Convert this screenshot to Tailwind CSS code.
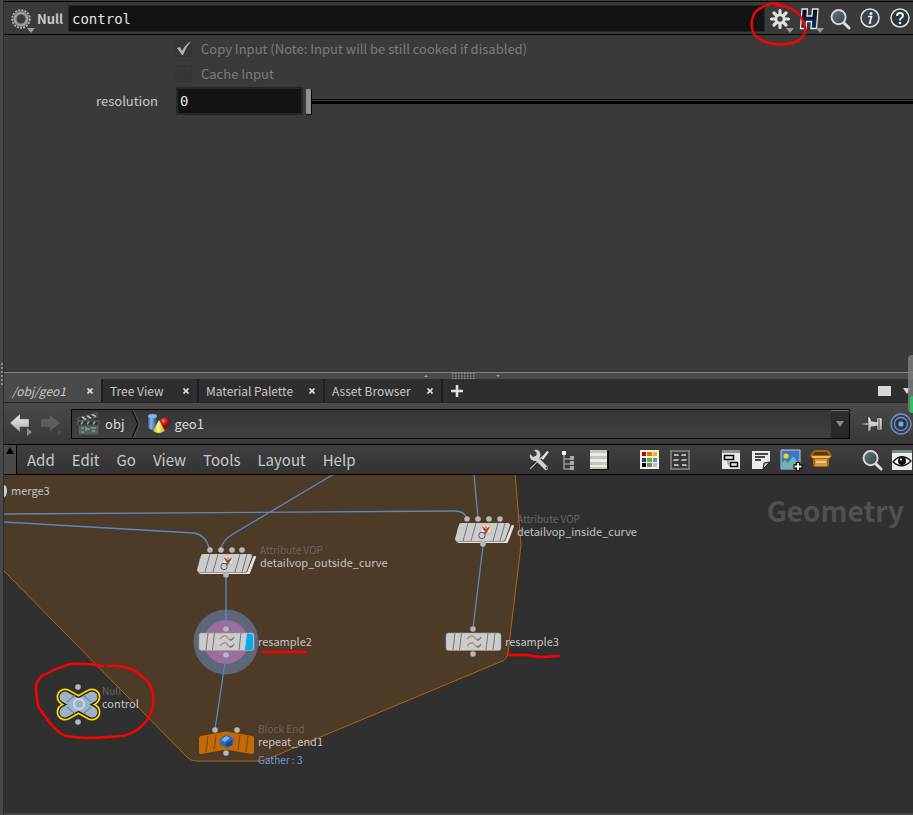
<!DOCTYPE html>
<html lang="en">
<head>
    <meta charset="UTF-8">
    <meta name="viewport" content="width=device-width, initial-scale=1.0">
    <title>/obj/geo1</title>
    <script src="https://cdn.jsdelivr.net/npm/@tailwindcss/browser@4"></script>
</head>
<body class="bg-[#474747] font-['Noto_Sans_CJK_SC','Source_Sans_Pro',sans-serif] text-[#c8c8c8]">

    <!-- Shared gradients and node shapes -->
    <svg class="absolute size-0" aria-hidden="true">
        <defs>
            <linearGradient id="metal" x1="0" y1="0" x2="0" y2="1"><stop offset="0" stop-color="#f4f4f0"/><stop offset="1" stop-color="#a8a8a4"/></linearGradient>
            <linearGradient id="lens" x1="0" y1="0" x2="1" y2="1"><stop offset="0" stop-color="#66757c"/><stop offset="1" stop-color="#36434a"/></linearGradient>
            <linearGradient id="navy" x1="0" y1="0" x2="0" y2="1"><stop offset="0" stop-color="#03070f"/><stop offset="1" stop-color="#0b3768"/></linearGradient>
            <linearGradient id="blueCan" x1="0" x2="1"><stop offset="0" stop-color="#2c5c9c"/><stop offset=".35" stop-color="#8fb6e2"/><stop offset="1" stop-color="#1d4580"/></linearGradient>
            <radialGradient id="redBall" cx=".4" cy=".3"><stop offset="0" stop-color="#f08070"/><stop offset=".5" stop-color="#c42318"/><stop offset="1" stop-color="#7c100c"/></radialGradient>
            <linearGradient id="cone" x1="0" x2="1"><stop offset="0" stop-color="#c9ab10"/><stop offset=".45" stop-color="#fff38a"/><stop offset="1" stop-color="#c79e08"/></linearGradient>
            <radialGradient id="ring"><stop offset=".4" stop-color="#404040"/><stop offset=".75" stop-color="#a8a8a8"/><stop offset="1" stop-color="#707070"/></radialGradient>
            <symbol id="glass" viewBox="0 0 22 22" overflow="visible">
                <path d="M14 14l6 6" stroke="#e0e0dc" stroke-width="3" stroke-linecap="round"/>
                <circle cx="9" cy="8.500" r="7.400" fill="url(#lens)" stroke="#d8d8d4" stroke-width="2"/>
            </symbol>
            <symbol id="vop" viewBox="0 0 64 30" overflow="visible">
                <path d="M8 8h51l3-1-6 16H8l-2-1z" fill="#e4e4e4" stroke="#e4e4e4" stroke-width="2" stroke-linejoin="round"/>
                <path d="M9 6h50l-6 15H6z" fill="#454545" stroke="#454545" stroke-width="3" stroke-linejoin="round"/>
                <path d="M10 6h47l-5 14H6z" fill="#cccccc" stroke="#cccccc" stroke-width="4" stroke-linejoin="round"/>
                <path d="M17 4l-5 18M25 4l-5 18M47 4l-5 18M54 4l-5 18" stroke="#777" stroke-width="1"/>
                <path d="M30 6h10v8H30z" fill="#e8e4e0" stroke="#aaa" stroke-width=".5"/>
                <path d="M31 7l4 3 4-3-1 3-3 4-3-4z" fill="#b8372c"/>
                <path d="M34 7h2v2h-2z" fill="#e09a30"/>
                <circle cx="31" cy="16.500" r="3.200" fill="#d0d0d0" stroke="#555"/>
                <path d="M33 15l3-3" stroke="#666" stroke-width="2"/>
            </symbol>
            <symbol id="resample" viewBox="0 0 56 18" overflow="visible">
                <rect width="55" height="17.500" rx="2.500" fill="#cccccc" stroke="#9b9b9b" stroke-width=".6"/>
                <path d="M9 0L7 17M15.500 0l-2 17M42 0l-2 17M49 0l-2 17" stroke="#777"/>
                <path d="M21 6q5-6 8-1t5 0M21 13q5-6 8-1t5 0" fill="none" stroke="#b58a88" stroke-width="1.400"/>
                <path d="M31 6q2 2 4-2M31 13q2 2 4-2" fill="none" stroke="#777" stroke-width="1.200"/>
            </symbol>
        </defs>
    </svg>

    <div class="flex h-screen overflow-hidden">

        <!-- Left rail -->
        <div class="relative w-1 shrink-0 border-r border-[#2c2c2c] bg-[#484848]">
            <div class="absolute top-[363px] left-px h-[22px] w-0.5 border-l-2 border-dotted border-[#8a8a8a]"></div>
        </div>

        <main class="relative flex min-w-0 flex-1 flex-col overflow-hidden pb-0.5">

            <!-- Parameter pane -->
            <section class="flex min-h-0 flex-[372] flex-col bg-[#3a3a3a]">
                <header class="mt-px flex h-[34px] shrink-0 items-center border-y border-black pt-px">
                    <button class="relative ml-[7px] size-5 shrink-0" aria-label="Node menu">
                        <svg viewBox="0 0 20 20" class="size-5 overflow-visible">
                            <circle cx="10" cy="10" r="8.800" fill="none" stroke="#b4b4b4" stroke-width="1.800" stroke-dasharray="2 1.200"/>
                            <circle cx="10" cy="10" r="8" fill="url(#ring)"/>
                            <circle cx="10" cy="10" r="4.200" fill="#3c3c3c"/>
                            <path d="M16 19h8l-4 5z" fill="#9a9a9a"/>
                        </svg>
                    </button>
                    <label for="nodeName" class="w-[37px] shrink-0 pl-1.5 text-[13px] leading-5 font-bold">Null</label>
                    <input id="nodeName" type="text" value="control" class="h-[27px] min-w-0 flex-1 border border-[#262626] bg-[#131313] px-[3px] font-['DejaVu_Sans_Mono','Liberation_Mono',monospace] text-sm text-[#e4e4e4]">
                    <button class="relative flex w-[30px] shrink-0 pl-[5px]" aria-label="Gear menu">
                        <svg viewBox="0 0 20 20" class="size-5 overflow-visible">
                            <g stroke="#e0e0dc" stroke-width="3.200" stroke-linecap="round">
                                <path d="M10 1.500v17M1.500 10h17M4 4l12 12M16 4L4 16"/>
                            </g>
                            <circle cx="10" cy="10" r="5.600" fill="#e0e0dc"/>
                            <circle cx="10" cy="10" r="2.700" fill="#3a3a3a"/>
                            <path d="M16 19h8l-4 5z" fill="#9a9a9a"/>
                        </svg>
                        <!-- red pen mark -->
                        <svg viewBox="0 0 56 44" class="pointer-events-none absolute -top-1.5 -left-3.5 z-10 h-11 w-14 overflow-visible">
                            <path d="M28 1C25 0 20 0 16 2C9 5 3 8 2 14C-1 20 1 31 6 34C12 39 17 41 24 41C31 42 41 41 47 38C52 35 55 30 54 24C52 15 47 9 41 6C37 4 33 3 25 2" fill="none" stroke="#f00" stroke-width="2.400" stroke-linecap="round"/>
                        </svg>
                    </button>
                    <button class="flex w-[30px] shrink-0 pl-[5px]" aria-label="Houdini">
                        <svg viewBox="0 0 20 20" class="size-5 overflow-visible">
                            <path d="M2 0h5.500L7 7h5l.5-7H18l-1.500 19.500H11l.5-7h-5l-.5 7H.5z" fill="url(#navy)" stroke="#e8e8e8" stroke-width="1.300"/>
                            <path d="M16 19h8l-4 5z" fill="#9a9a9a"/>
                        </svg>
                    </button>
                    <button class="flex w-[30px] shrink-0 pl-[5px]" aria-label="Search">
                        <svg class="size-5 overflow-visible"><use href="#glass" width="21" height="21"/></svg>
                    </button>
                    <button class="flex w-[30px] shrink-0 pl-[5px]" aria-label="Info">
                        <svg viewBox="0 0 20 20" class="size-5 overflow-visible">
                            <circle cx="10" cy="9" r="9" fill="#38444a" stroke="#e0e0dc" stroke-width="1.500"/>
                            <circle cx="11" cy="4.500" r="1.500" fill="#f0f0ec"/>
                            <path d="M8 7.500h3.500L9.700 14h1.500" fill="none" stroke="#f0f0ec" stroke-width="1.700"/>
                        </svg>
                    </button>
                    <button class="flex w-7 shrink-0 pl-[5px]" aria-label="Help">
                        <svg viewBox="0 0 20 20" class="size-5 overflow-visible">
                            <circle cx="10" cy="9" r="9" fill="#2b343a" stroke="#e0e0dc" stroke-width="1.500"/>
                            <path d="M7 7q0-3 3-3t3 2.600q0 1.400-1.600 2.400T10 11.500" fill="none" stroke="#f0f0ec" stroke-width="2"/>
                            <circle cx="10" cy="14" r="1.300" fill="#f0f0ec"/>
                        </svg>
                    </button>
                </header>

                <div class="flex flex-col pt-px text-[13px] leading-5">
                    <div class="flex h-[25px] items-center pl-[171px] text-[#7c7c7c]">
                        <span class="relative size-[17px]">
                            <input id="copyInput" type="checkbox" checked disabled class="block size-[17px] appearance-none border border-[#333] bg-[#363636]">
                            <svg viewBox="0 0 17 17" class="pointer-events-none absolute inset-0"><path d="M2 8l3-1 2 4q3-6 9-10-5 6-8 14H7z" fill="#b4b4b4"/></svg>
                        </span>
                        <label for="copyInput" class="pl-[9px]">Copy Input (Note: Input will be still cooked if disabled)</label>
                    </div>
                    <div class="flex h-[25px] items-center pl-[171px] text-[#7c7c7c]">
                        <input id="cacheInput" type="checkbox" disabled class="size-[17px] appearance-none border border-[#333] bg-[#363636]">
                        <label for="cacheInput" class="pl-[9px]">Cache Input</label>
                    </div>
                    <div class="flex h-[30px] items-center">
                        <label for="resolution" class="w-[154px] text-right">resolution</label>
                        <input id="resolution" type="text" value="0" class="ml-[18px] h-7 w-[127px] border-2 border-[#262626] bg-[#131313] px-0.5 font-['DejaVu_Sans_Mono','Liberation_Mono',monospace] text-sm text-[#e4e4e4]">
                        <input type="range" min="0" max="10" value="0" aria-label="resolution" class="ml-[3px] h-[26px] min-w-0 flex-1 appearance-none bg-transparent [&::-webkit-slider-runnable-track]:h-[5px] [&::-webkit-slider-runnable-track]:border-t [&::-webkit-slider-runnable-track]:border-black [&::-webkit-slider-runnable-track]:bg-linear-to-b [&::-webkit-slider-runnable-track]:from-[#3a3a3a] [&::-webkit-slider-runnable-track]:from-25% [&::-webkit-slider-runnable-track]:to-black [&::-webkit-slider-runnable-track]:to-25% [&::-webkit-slider-thumb]:-mt-[11px] [&::-webkit-slider-thumb]:h-[26px] [&::-webkit-slider-thumb]:w-[6px] [&::-webkit-slider-thumb]:appearance-none [&::-webkit-slider-thumb]:border-r [&::-webkit-slider-thumb]:border-b [&::-webkit-slider-thumb]:border-black [&::-webkit-slider-thumb]:bg-[#919191]">
                    </div>
                </div>
            </section>

            <!-- Network pane -->
            <section class="flex min-h-0 flex-[441] flex-col bg-[#303030]">

                <!-- Splitter -->
                <div class="flex h-[7px] shrink-0 items-center justify-center border-t border-[#808080] bg-[#4a4a4a] pl-1.5">
                    <svg viewBox="0 0 76 6" class="h-1.5 w-[76px]">
                        <path d="M0 4h4L2 2zM72 2h4l-2 2z" fill="#a0a0a0"/>
                        <path d="M28 .5h23M28 3h23M28 5.500h23" stroke="#a0a0a0" stroke-dasharray="1.500 1.500"/>
                    </svg>
                </div>

                <!-- Tabs -->
                <div class="flex h-6 shrink-0 border-b border-[#262626] bg-[#2e2e2e] text-xs leading-5">
                    <div class="flex w-[97px] items-center justify-between bg-[#4a4a4a] pr-2 pl-2">
                        <button class="italic">/obj/geo1</button>
                        <button aria-label="Close"><svg viewBox="0 0 6 6" class="size-1.5"><path d="M.5.5l5 5M5.500.500l-5 5" stroke="#ddd" stroke-width="1.700"/></svg></button>
                    </div>
                    <div class="flex w-24 items-center justify-between border-l-2 border-[#1e1e1e] pr-2 pl-[7px]">
                        <button>Tree View</button>
                        <button aria-label="Close"><svg viewBox="0 0 6 6" class="size-1.5"><path d="M.5.5l5 5M5.500.500l-5 5" stroke="#ddd" stroke-width="1.700"/></svg></button>
                    </div>
                    <div class="flex w-[126px] items-center justify-between border-l-2 border-[#1e1e1e] pr-2 pl-[7px]">
                        <button>Material Palette</button>
                        <button aria-label="Close"><svg viewBox="0 0 6 6" class="size-1.5"><path d="M.5.5l5 5M5.500.500l-5 5" stroke="#ddd" stroke-width="1.700"/></svg></button>
                    </div>
                    <div class="flex w-[118px] items-center justify-between border-l-2 border-[#1e1e1e] pr-2 pl-[7px]">
                        <button>Asset Browser</button>
                        <button aria-label="Close"><svg viewBox="0 0 6 6" class="size-1.5"><path d="M.5.5l5 5M5.500.500l-5 5" stroke="#ddd" stroke-width="1.700"/></svg></button>
                    </div>
                    <button class="border-l-2 border-[#1e1e1e] pl-2" aria-label="New tab">
                        <svg viewBox="0 0 12 12" class="size-3"><path d="M6 0v12M0 6h12" stroke="#e0e0e0" stroke-width="2.600"/></svg>
                    </button>
                    <div class="ml-auto flex items-center gap-3">
                        <button class="h-2.5 w-[13px] bg-[#d8d8d8]" aria-label="Maximize pane"></button>
                        <button aria-label="Pane menu"><svg viewBox="0 0 10 8" class="h-2 w-2.5"><path d="M0 1h8L4 7z" fill="#d8d8d8"/></svg></button>
                    </div>
                </div>

                <!-- Path bar -->
                <div class="flex h-[41px] shrink-0 items-center bg-linear-to-b from-[#4a4a4a] to-[#383838]">
                    <button class="ml-1.5 w-[30px]" aria-label="Back">
                        <svg viewBox="0 0 24 24" class="size-6"><path d="M0 11L10 2v5h9v8h-9v5z" fill="url(#metal)" stroke="#555" stroke-width=".5"/><path d="M17 16l5 4-5 4z" fill="#8a8a8a"/></svg>
                    </button>
                    <button class="w-[31px]" aria-label="Forward">
                        <svg viewBox="0 0 24 24" class="size-6"><path d="M20 11L10 3v4H1v8h9v4z" fill="#5c5c5c"/><path d="M18 17l4 3-4 3z" fill="#4c4c4c"/></svg>
                    </button>
                    <nav class="flex h-[30px] min-w-0 flex-1 items-center border border-black bg-linear-to-b from-[#363636] to-[#404040] text-[13px] leading-5 text-[#dcdcdc]">
                        <button class="flex h-full items-center gap-1 pl-[5px]">
                            <svg viewBox="0 0 24 24" class="size-6 overflow-visible">
                                <path d="M1 6L20 1v4L2 9z" fill="#2c3032" stroke="#7c8484" stroke-width=".6"/>
                                <path d="M5 5l4 2.500M10 4l4 2M15 2.500l4 2" stroke="#c0c4c4" stroke-width="1.500"/>
                                <path d="M1 9h21v4H1z" fill="#2c3032" stroke="#7c8484" stroke-width=".6"/>
                                <path d="M4 12.500L6 9.500M10 12.500l2-3M16 12.500l2-3" stroke="#a0a8a8" stroke-width="1.500"/>
                                <path d="M1 13h21v10H1z" fill="#556062" stroke="#2a2e30" stroke-width=".6"/>
                                <path d="M4 16h3M4 20h3M9 15v4M10 17h3M14 16h5M15 19h3" fill="none" stroke="#a8b0b0"/>
                            </svg>
                            <span>obj</span>
                        </button>
                        <svg viewBox="0 0 8 28" class="ml-[7px] h-7 w-2"><path d="M0 0l6 14L0 28" fill="none" stroke="#111" stroke-width="1.500"/><path d="M1.500 0l6 14-6 14" fill="none" stroke="#5c5c5c"/></svg>
                        <button class="flex h-full items-center gap-1 pl-[7px]">
                            <svg viewBox="0 0 24 24" class="size-6 overflow-visible">
                                <path d="M1 4v12q4.500 3.500 9 0V4z" fill="url(#blueCan)"/>
                                <ellipse cx="5.500" cy="4" rx="4.500" ry="2" fill="#8fb4e0"/>
                                <circle cx="17.500" cy="11" r="5.500" fill="url(#redBall)"/>
                                <path d="M12 8L6 19q5.500 4 12 0z" fill="url(#cone)"/>
                            </svg>
                            <span>geo1</span>
                        </button>
                        <button class="ml-auto flex h-full w-[18px] items-center justify-center border-t border-[#707070] bg-linear-to-b from-[#303030] to-[#262626]" aria-label="Path history">
                            <svg viewBox="0 0 8 6" class="h-1.5 w-2"><path d="M0 0h8L4 6z" fill="#8a8a8a"/></svg>
                        </button>
                    </nav>
                    <button class="ml-[11px]" aria-label="Pin">
                        <svg viewBox="0 0 22 20" class="h-5 w-[22px]">
                            <path d="M0 10l9-1v2z" fill="#ddd"/>
                            <path d="M7 2l3 3v2l6 1V4h5v12h-5v-4l-6 1v3l-3 2z" fill="url(#metal)" stroke="#222" stroke-width=".5"/>
                            <path d="M18 5v10" stroke="#444"/>
                        </svg>
                    </button>
                    <button class="mr-px ml-[7px]" aria-label="Link pane">
                        <svg viewBox="0 0 22 22" class="size-[22px]" fill="none" stroke="#6d8fc4">
                            <circle cx="11" cy="11" r="10" fill="#39414e" stroke-width="1.400"/><circle cx="11" cy="11" r="6.500" fill="#2c3440" stroke-width="1.300"/><circle cx="11" cy="11" r="2.700" fill="#7fa8e4" stroke="#3e68a8"/>
                        </svg>
                    </button>
                </div>

                <!-- Menu bar -->
                <div class="flex h-[31px] shrink-0 items-stretch border-y border-black bg-linear-to-b from-[#3f3f3f] to-[#333]">
                    <button class="flex w-[13px] shrink-0 justify-center border-r border-black bg-[#4a4a4a] pt-0.5" aria-label="Collapse">
                        <svg viewBox="0 0 8 7" class="h-[7px] w-2"><path d="M0 7h8L4 0z" fill="#000"/></svg>
                    </button>
                    <div class="flex items-center gap-[17px] pl-2.5 text-[15px] leading-5">
                        <button>Add</button>
                        <button>Edit</button>
                        <button>Go</button>
                        <button>View</button>
                        <button>Tools</button>
                        <button>Layout</button>
                        <button>Help</button>
                    </div>
                    <div class="ml-auto flex items-center gap-[31px]">
                        <div class="flex gap-2.5">
                            <button aria-label="Tools"><svg viewBox="0 0 20 20" class="size-5 overflow-visible">
                                <path d="M1 19L12 8" stroke="#111" stroke-width="3"/><path d="M1 19L13 7" stroke="#b4b8b8" stroke-width="1.500"/>
                                <path d="M12 8l6-7 2 1-6 8z" fill="#e0e4e0"/>
                                <path d="M7 8l10 10" stroke="#d0d4d0" stroke-width="4" stroke-linecap="round"/>
                                <path d="M5 0l3 3-1 3-3 1-3-3q-1 4 2 6t6 0l2-3q1-4-1-6t-5-1z" fill="#d0d4d0"/>
                                <circle cx="17.500" cy="18" r="1" fill="#333"/>
                            </svg></button>
                            <button aria-label="Tree"><svg viewBox="0 0 20 20" class="size-5">
                                <path d="M5 5v14h6M5 9h6M5 14h6" fill="none" stroke="#8e988e" stroke-width="1.500"/>
                                <path d="M3 1h4v4H3z" fill="#f0f4f0"/><path d="M11 6h4v4h-4zM11 11h4v4h-4zM11 16h4v4h-4z" fill="#a4aea4"/>
                            </svg></button>
                            <button aria-label="List"><svg viewBox="0 0 20 20" class="size-5">
                                <path d="M1 1h19v19H1z" fill="#111"/><path d="M1 0h17v19H1z" fill="#eaeae6"/><path d="M1 0h17v3H1zM1 6h17v3H1zM1 12h17v3H1zM1 17h17v2H1z" fill="#c4c6c0"/>
                            </svg></button>
                        </div>
                        <div class="flex gap-2.5">
                            <button aria-label="Color palette"><svg viewBox="0 0 20 20" class="size-5">
                                <path d="M0 0h19v19H0z" fill="#f0f0ec"/>
                                <path d="M2 2h4v4H2z" fill="#c00000"/><path d="M7 2h5v4H7z" fill="#e07000"/><path d="M13 2h4v4h-4z" fill="#e0c800"/>
                                <path d="M2 8h4v4H2z" fill="#1c3c80"/><path d="M7 8h5v4H7z" fill="#60b810"/><path d="M13 8h4v4h-4z" fill="#6890c0"/>
                                <path d="M2 13h4v4H2z" fill="#000"/><path d="M7 13h5v4H7z" fill="#808078"/><path d="M13 13h4v4h-4z" fill="#c0c0bc"/>
                            </svg></button>
                            <button aria-label="Node shapes"><svg viewBox="0 0 20 20" class="size-5">
                                <path d="M1 1h18v18H1z" fill="#383838" stroke="#888" stroke-width="1.500"/>
                                <path d="M4 4h4l1 2H4zM12 4h4v2h-5zM4 9h5l-1 2H3zM12 9h5l-1 2h-5zM4 14h4l1 2H4zM12 14h4l1 2h-5z" fill="#b0b0b0"/>
                            </svg></button>
                        </div>
                        <div class="flex gap-2.5">
                            <button aria-label="Network box"><svg viewBox="0 0 20 20" class="size-5">
                                <path d="M1 0h18v3H1z" fill="#8a9492"/><path d="M1 3h18v16H1z" fill="#e8ece8"/>
                                <path d="M3.500 5.500h9v4h-9zM9.500 12.500h7v4h-7z" fill="#e8ece8" stroke="#000" stroke-width="1.500"/><path d="M7 10v4h2" fill="none" stroke="#777"/>
                            </svg></button>
                            <button aria-label="Sticky note"><svg viewBox="0 0 20 20" class="size-5">
                                <path d="M1 1h18v11l-7 7H1z" fill="#e8ece8"/><path d="M12 19l1-6 6-1z" fill="#b8bcb8" stroke="#222"/>
                                <path d="M4 4h13M4 7h10M4 10h6" stroke="#111" stroke-width="1.400"/>
                            </svg></button>
                            <button aria-label="Add image"><svg viewBox="0 0 20 20" class="size-5 overflow-visible">
                                <path d="M0 0h19v19H0z" fill="#3c78c4" stroke="#c4ccd4"/><circle cx="5" cy="6" r="2.600" fill="#f0d820"/>
                                <path d="M1 18v-5l3-3 3 3 5-7 6 8v4z" fill="#74b4b0"/>
                                <path d="M17 12v9M12.500 16.500h9" stroke="#000" stroke-width="4.500"/><path d="M17 13v7M13.500 16.500h7" stroke="#fff" stroke-width="1.800"/>
                            </svg></button>
                            <button aria-label="Asset box"><svg viewBox="0 0 20 20" class="size-5 overflow-visible">
                                <path d="M2 1l3-1h10l3 1 3 5-3 3v7l-2 1H4l-2-1V9L-1 6z" fill="#a86410"/><path d="M4 9h12v7H4z" fill="#d89840"/><path d="M4 2h12l2 3H2z" fill="#5c3408"/><path d="M0 6h20l-2 2H2z" fill="#f0b860"/><path d="M5 12h10" stroke="#f0c880" stroke-width="2"/>
                            </svg></button>
                        </div>
                        <div class="flex gap-2.5">
                            <button aria-label="Find"><svg class="size-5 overflow-visible"><use href="#glass" width="21" height="21"/></svg></button>
                            <button class="mr-px" aria-label="Display options"><svg viewBox="0 0 20 20" class="size-5">
                                <path d="M0 0h20v20H0z" fill="#ececea"/><path d="M0 0h20v3H0z" fill="#7c8484"/>
                                <path d="M1 12q8-10 18-1-9 9-18 1z" fill="#fff" stroke="#111" stroke-width="1.300"/><circle cx="10" cy="11" r="4" fill="#111"/><circle cx="9" cy="9.500" r="1" fill="#fff"/>
                            </svg></button>
                        </div>
                    </div>
                </div>

                <!-- Node graph -->
                <div class="relative min-h-0 flex-1 overflow-hidden text-[11px] leading-3 text-[#c4c4c4]">
                    <div class="absolute top-[17px] right-[9px] text-[28px] leading-9 font-bold text-[#505050]">Geometry</div>
                    <svg class="absolute inset-0 size-full" fill="none">
                        <path d="M-2 94L183 282Q187 286 192 286H254Q260 286 266 283L496 187Q503 185 504 178L517 70L511-2H-2z" fill="#4d3a27" stroke="#b3640c"/>

                        <!-- wires -->
                        <g stroke="#5a88c0" stroke-width="1.300">
                            <path d="M0 39L451 36Q460 36 463 43"/>
                            <path d="M0 47L190 58Q202 60 205 73"/>
                            <path d="M330-1L229 59Q219 65 217 73"/>
                            <path d="M470 0L474 43"/>
                            <path d="M479 71L469 153"/>
                        </g>

                        <!-- display ring -->
                        <circle cx="222" cy="167" r="32.500" fill="#5d6779"/>
                        <circle cx="222" cy="167" r="22" fill="#9a6fa0"/>
                        <path d="M222 102V153M222 181L211 254" stroke="#5a88c0" stroke-width="1.300"/>

                        <use href="#vop" x="189" y="75" width="64" height="30"/>
                        <use href="#vop" x="447" y="44" width="64" height="30"/>
                        <use href="#resample" x="195" y="158" width="56" height="18"/>
                        <use href="#resample" x="442" y="158" width="56" height="18"/>
                        <path d="M243 159h4q2 0 2 2v12q0 2-2 2h-6z" fill="#00aaf4"/>

                        <!-- block end -->
                        <path d="M197 263L222 258.500L248 263V277L222 272.500L197 277z" fill="#c46a04" stroke="#c46a04" stroke-width="4" stroke-linejoin="round"/>
                        <path d="M204 261l-2 16M212 260l-2 15M236 260l-2 15M244 261l-2 16" stroke="#7c4406"/>
                        <path d="M216 264l5-4 5 1 4 3-1 6-6 3-7-3z" fill="#2c66b4"/><path d="M217 265l5-4 4 2-5 4z" fill="#7cacec"/><path d="M222 268l6-3v5l-6 2z" fill="#1c4888"/>

                        <!-- null node -->
                        <g stroke-linecap="round">
                            <path d="M61 222L88 237M88 222L61 237" stroke="#ffd800" stroke-width="17"/>
                            <path d="M61 222L88 237M88 222L61 237" stroke="#1c1c1c" stroke-width="13.500"/>
                            <path d="M61 222L88 237M88 222L61 237" stroke="#9cb2c6" stroke-width="11"/>
                        </g>
                        <path d="M63 227l8-7M79 220l8 7M63 232l8 7M79 239l8-7" stroke="#5c6c7c"/>
                        <circle cx="75" cy="229" r="5" fill="#92adc6" stroke="#c8d2dc" stroke-width="2.400"/>

                        <!-- merge3 sits half off the left edge -->
                        <ellipse cx="0" cy="16" rx="3" ry="6" fill="#d0d0d0"/>

                        <g fill="#b8b8b8">
                            <circle cx="206" cy="75" r="2.800"/><circle cx="217" cy="75" r="2.800"/><circle cx="228" cy="75" r="2.800"/><circle cx="238" cy="75" r="2.800"/><circle cx="222" cy="100" r="2.800"/>
                            <circle cx="463" cy="44" r="2.800"/><circle cx="474" cy="44" r="2.800"/><circle cx="485" cy="44" r="2.800"/><circle cx="496" cy="44" r="2.800"/><circle cx="479" cy="69" r="2.800"/>
                            <circle cx="222" cy="154" r="2.800"/><circle cx="222" cy="180" r="2.800"/>
                            <circle cx="469" cy="154" r="2.800"/><circle cx="469" cy="179" r="2.800"/>
                            <circle cx="211" cy="255" r="2.800"/><circle cx="233" cy="255" r="2.800"/><circle cx="222" cy="278" r="2.800"/>
                            <circle cx="74" cy="212" r="2.800"/><circle cx="74" cy="247" r="2.800"/>
                        </g>
                    </svg>

                    <div class="absolute top-[9px] left-[7px]">merge3</div>
                    <div class="absolute top-[69px] left-64"><p class="text-[10px] leading-3 text-[#6a6560]">Attribute VOP</p><p>detailvop_outside_curve</p></div>
                    <div class="absolute top-[38px] left-[513px]"><p class="text-[10px] leading-3 text-[#6a6560]">Attribute VOP</p><p>detailvop_inside_curve</p></div>
                    <div class="absolute top-[160px] left-[254px]">resample2</div>
                    <div class="absolute top-[160px] left-[501px]">resample3</div>
                    <div class="absolute top-[210px] left-[98px]"><p class="text-[10px] leading-3 text-[#6a6560]">Null</p><p>control</p></div>
                    <div class="absolute top-[248px] left-[254px]"><p class="text-[10px] leading-3 text-[#6a6560]">Block End</p><p>repeat_end1</p><p class="pt-[7px] text-[10px] leading-3 text-[#6f9bd8]">Gather : 3</p></div>

                    <!-- red pen marks -->
                    <svg class="pointer-events-none absolute inset-0 size-full" fill="none" stroke="#f00" stroke-width="2.400" stroke-linecap="round">
                        <path d="M99 191Q84 188 66 189L52 194L38 201Q33 205 32 211Q32 223 35 233L46 248Q52 256 61 261Q74 263 89 263L119 261Q130 258 138 251Q146 243 149 232Q150 221 148 215Q145 206 139 202Q129 194 124 193Q114 190 104 191"/>
                        <path d="M259 177H302M505 180H523Q532 182 538 182L555 181"/>
                    </svg>
                </div>
            </section>

            <!-- Scroll indicator over the right edge -->
            <div class="absolute top-[355px] -right-1 h-[58px] w-[9px] rounded bg-[#808080]/80">
                <div class="absolute right-0 bottom-0 h-[17px] w-[7px] rounded bg-[#28c468]"></div>
            </div>
        </main>
    </div>
</body>
</html>
